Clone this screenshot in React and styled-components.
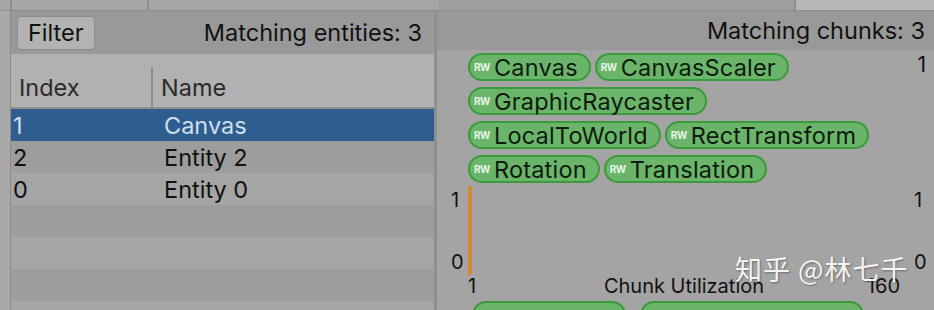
import React from 'react'
import styled, { createGlobalStyle } from 'styled-components'

const GlobalStyle = createGlobalStyle`
    html, body {
        margin: 0;
        padding: 0;
        background: #a4a4a4;
        font-family: Inter, "Noto Sans", sans-serif;
        overflow: hidden;
    }
`

const Page = styled.div`
    width: 934px;
    height: 310px;
    display: flex;
    flex-direction: column;
    overflow: hidden;
    position: relative;
`

const TopStrip = styled.div`
    height: 10px;
    display: flex;
    border-bottom: 1px solid #8c8c8c;
`

const TopCell = styled.div`
    width: ${p => p.w ? `${p.w}px` : 'auto'};
    flex: ${p => p.w ? 'none' : 1};
    background: ${p => p.bg};
    border-right: ${p => p.line ? '2px solid #8e8e8e' : 'none'};
`

const Main = styled.div`
    flex: 1;
    display: flex;
    min-height: 0;
`

const Gutter = styled.div`
    width: 10px;
    background: #a9a9a9;
    border-right: 1px solid #8a8a8a;
`

const LeftPanel = styled.div`
    width: 423px;
    display: flex;
    flex-direction: column;
    border-right: 2px solid #8f8f8f;
`

const PanelHeader = styled.div`
    height: ${p => p.h}px;
    background: #999999;
    display: flex;
    align-items: center;
    justify-content: space-between;
    padding: 0 12px 0 6px;
    color: #111;
    font-size: 23.5px;
    flex-shrink: 0;
`

const FilterButton = styled.div`
    height: 34px;
    box-sizing: border-box;
    padding: 0 10px;
    display: flex;
    align-items: center;
    background: #b3b3b3;
    border: 1px solid #8d8d8d;
    border-radius: 4px;
    font-size: 23.5px;
    color: #111;
`

const ColumnHeader = styled.div`
    height: 53px;
    background: #b1b1b1;
    display: grid;
    grid-template-columns: 140px 1fr;
    align-items: end;
    border-bottom: 2px solid #8f8f8f;
    flex-shrink: 0;
    font-size: 23.5px;
    color: #2a2a2a;
`

const ColumnTitle = styled.div`
    padding: 0 0 5px ${p => p.pad}px;
    height: 40px;
    box-sizing: border-box;
    display: flex;
    align-items: flex-end;
    border-left: ${p => p.sep ? '2px solid #8c8c8c' : 'none'};
`

const Row = styled.div`
    height: 32px;
    display: grid;
    grid-template-columns: 151px 1fr;
    align-items: center;
    padding-left: 2px;
    font-size: 23.5px;
    background: ${p => p.selected ? '#2e5e90' : p.odd ? '#9d9d9d' : '#a5a5a5'};
    color: ${p => p.selected ? '#d2deea' : '#111'};
    flex-shrink: 0;
`

const RightPanel = styled.div`
    flex: 1;
    display: flex;
    flex-direction: column;
    border-left: 1px solid #8e8e8e;
`

const ChunkHeader = styled(PanelHeader)`
    justify-content: flex-end;
    padding-right: 9px;
`

const ChunkBody = styled.div`
    padding: 3px 8px 0 31px;
    display: flex;
    flex-direction: column;
`

const TagArea = styled.div`
    display: grid;
    grid-template-columns: 1fr auto;
`

const Count = styled.div`
    font-size: 21px;
    color: #111;
    line-height: 24px;
`

const TagList = styled.div`
    display: flex;
    flex-wrap: wrap;
    gap: 6px 4px;
    width: 420px;
`

const Tag = styled.div`
    height: 28px;
    box-sizing: border-box;
    display: flex;
    align-items: center;
    padding: 0 11px 0 4px;
    background: #6ab56a;
    border: 2px solid #3b9a3b;
    border-radius: 14px;
    font-size: 23.5px;
    letter-spacing: 0.2px;
    color: #0e1a0e;
`

const Rw = styled.span`
    font-size: 10px;
    font-weight: 700;
    color: #e8f4e8;
    margin-right: 4px;
    letter-spacing: -0.5px;
`

const Chart = styled.div`
    margin-top: 3px;
    margin-left: -17px;
    display: grid;
    grid-template-columns: 17px 1fr 12px;
    height: 89px;
    font-size: 20px;
    color: #111;
`

const AxisLabels = styled.div`
    display: flex;
    flex-direction: column;
    justify-content: space-between;
    align-items: flex-start;
    padding: 2px 0 1px;
`

const Plot = styled.div`
    display: flex;
    align-items: flex-end;
`

const Bar = styled.div`
    width: 4px;
    background: #d38a32;
`

const AxisFooter = styled.div`
    display: grid;
    grid-template-columns: 60px 1fr 60px;
    font-size: 20px;
    color: #111;
    line-height: 22px;
    margin-right: 26px;
`

const FooterCell = styled.div`
    text-align: ${p => p.align};
`

const NextTags = styled.div`
    display: flex;
    gap: 14px;
    margin-top: 4px;
    padding-left: 4px;
`

const Stub = styled.div`
    width: ${p => p.w}px;
    height: 24px;
    background: #6ab56a;
    border: 2px solid #3b9a3b;
    border-radius: 14px;
`

const Watermark = styled.div`
    position: absolute;
    left: 735px;
    top: 249px;
    font-family: "Noto Sans CJK SC", sans-serif;
    font-size: 27px;
    color: #f4f4f4;
    text-shadow: 1px 1px 2px rgba(0,0,0,0.35);
    letter-spacing: 1px;
`

const entities = [
    { index: 1, name: 'Canvas', selected: true },
    { index: 2, name: 'Entity 2' },
    { index: 0, name: 'Entity 0' },
]

const tags = ['Canvas', 'CanvasScaler', 'GraphicRaycaster', 'LocalToWorld', 'RectTransform', 'Rotation', 'Translation']

const App = () => {
    const emptyRows = [0, 1, 2, 3]
    return (
        <Page>
            <GlobalStyle />
            <TopStrip>
                <TopCell w={10} bg="#a6a6a6" line />
                <TopCell w={135} bg="#a6a6a6" line />
                <TopCell w={289} bg="#a6a6a6" />
                <TopCell w={356} bg="#9f9f9f" line />
                <TopCell bg="#b7b7b7" />
            </TopStrip>
            <Main>
                <Gutter />
                <LeftPanel>
                    <PanelHeader h={43}>
                        <FilterButton>Filter</FilterButton>
                        <span>Matching entities: 3</span>
                    </PanelHeader>
                    <ColumnHeader>
                        <ColumnTitle pad={8}>Index</ColumnTitle>
                        <ColumnTitle pad={8} sep>Name</ColumnTitle>
                    </ColumnHeader>
                    {entities.map((e, i) => (
                        <Row key={e.name} selected={e.selected} odd={i % 2 === 1}>
                            <span>{e.index}</span>
                            <span>{e.name}</span>
                        </Row>
                    ))}
                    {emptyRows.map(i => (
                        <Row key={i} odd={(i + 3) % 2 === 1} />
                    ))}
                </LeftPanel>
                <RightPanel>
                    <ChunkHeader h={39}>Matching chunks: 3</ChunkHeader>
                    <ChunkBody>
                        <TagArea>
                            <TagList>
                                {tags.map(t => (
                                    <Tag key={t}><Rw>RW</Rw>{t}</Tag>
                                ))}
                            </TagList>
                            <Count>1</Count>
                        </TagArea>
                        <Chart>
                            <AxisLabels><span>1</span><span>0</span></AxisLabels>
                            <Plot><Bar style={{ height: '100%' }} /></Plot>
                            <AxisLabels><span>1</span><span>0</span></AxisLabels>
                        </Chart>
                        <AxisFooter>
                            <FooterCell align="left">1</FooterCell>
                            <FooterCell align="center">Chunk Utilization</FooterCell>
                            <FooterCell align="right">160</FooterCell>
                        </AxisFooter>
                        <NextTags>
                            <Stub w={150} />
                            <Stub w={220} />
                        </NextTags>
                    </ChunkBody>
                </RightPanel>
            </Main>
            <Watermark>知乎 @林七千</Watermark>
        </Page>
    )
}

export default App
